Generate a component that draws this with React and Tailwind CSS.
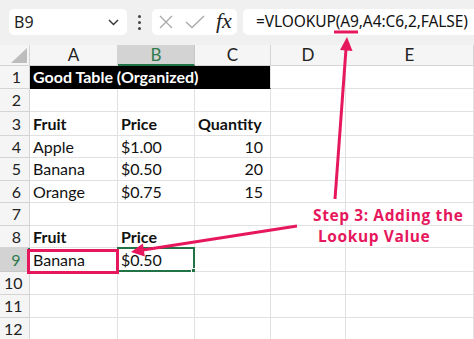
import React from "react";

const GRID = "'Lato', 'Open Sans', sans-serif";
const UI = "'Noto Sans', 'Open Sans', sans-serif";

const rowHeights = [23, 23, 24, 22, 23, 22, 23, 22, 24, 23, 23, 23];

const data = {
  1: { A: { t: "Good Table (Organized)", b: true, w: true } },
  3: { A: { t: "Fruit", b: true }, B: { t: "Price", b: true }, C: { t: "Quantity", b: true } },
  4: { A: { t: "Apple" }, B: { t: "$1.00" }, C: { t: "10", r: true } },
  5: { A: { t: "Banana" }, B: { t: "$0.50" }, C: { t: "20", r: true } },
  6: { A: { t: "Orange" }, B: { t: "$0.75" }, C: { t: "15", r: true } },
  8: { A: { t: "Fruit", b: true }, B: { t: "Price", b: true } },
  9: { A: { t: "Banana" }, B: { t: "$0.50" } },
};

const cols = [
  { k: "A", w: "w-[88px]" },
  { k: "B", w: "w-[77px]" },
  { k: "C", w: "w-[76px]" },
  { k: "D", w: "w-[75px]" },
  { k: "E", w: "flex-1" },
];

function Cell({ row, col }) {
  const c = (data[row] || {})[col.k];
  const black = row === 1 && (col.k === "A" || col.k === "B" || col.k === "C");
  const selected = row === 9 && col.k === "B";
  return (
    <div
      className={`${col.w} relative shrink-0 flex items-center border-r border-b ${
        black ? "bg-black border-black" : "bg-white border-[#e1e1e1]"
      } ${col.k === "C" && row === 1 ? "border-r-[#e1e1e1]" : ""}`}
    >
      {c && (
        <span
          className={`absolute z-10 top-0 bottom-0 flex items-center whitespace-nowrap text-[16px] leading-none ${
            c.r ? "right-[7px]" : "left-[3px]"
          } ${c.b ? "font-bold" : ""} ${c.w ? "text-white" : "text-[#111]"}`}
          style={{ fontFamily: GRID }}
        >
          {c.t}
        </span>
      )}
      {selected && (
        <div className="absolute -left-px -top-px right-[-1px] bottom-[-1px] border-2 border-[#217346]">
          <div className="absolute right-[-4px] bottom-[-4px] w-[6px] h-[6px] bg-[#217346] border border-white" />
        </div>
      )}
    </div>
  );
}

export default function App() {
  return (
    <div className="relative w-[474px] h-[339px] overflow-hidden bg-white">
      {/* formula bar */}
      <div className="h-[45px] bg-[#f0f0f0] flex items-start pt-[9px] pl-[9px]">
        <div className="w-[118px] h-[26px] bg-white rounded-[5px] flex items-center justify-between pl-[5px] pr-[8px]">
          <span className="text-[16px] text-[#222]" style={{ fontFamily: UI }}>
            B9
          </span>
          <svg width="11" height="7" viewBox="0 0 11 7">
            <path d="M1 1 L5.5 5.5 L10 1" fill="none" stroke="#333" strokeWidth="1.4" />
          </svg>
        </div>
        <div className="w-[25px] h-[26px] flex flex-col items-center justify-center gap-[3px]">
          <div className="w-[3px] h-[3px] rounded-full bg-[#444]" />
          <div className="w-[3px] h-[3px] rounded-full bg-[#444]" />
          <div className="w-[3px] h-[3px] rounded-full bg-[#444]" />
        </div>
        <div className="w-[85px] h-[26px] bg-white rounded-[5px] flex items-center pl-[6px]">
          <svg width="16" height="16" viewBox="0 0 16 16">
            <path d="M2 2 L14 14 M14 2 L2 14" stroke="#a8a8a8" strokeWidth="1.3" fill="none" />
          </svg>
          <svg width="20" height="14" viewBox="0 0 20 14" className="ml-[11px]">
            <path d="M1 7 L7 12.5 L19 1" stroke="#a8a8a8" strokeWidth="1.3" fill="none" />
          </svg>
          <span
            className="ml-[11px] text-[22px] italic leading-none text-[#222] -mt-[3px]"
            style={{ fontFamily: "'Liberation Serif', serif" }}
          >
            fx
          </span>
        </div>
        <div className="ml-[6px] flex-1 h-[26px] bg-white rounded-l-[5px] flex items-center pl-[13px]">
          <span className="text-[15.5px] text-[#111] whitespace-nowrap tracking-[-0.1px]" style={{ fontFamily: UI }}>
            =VLOOKUP(A9,A4:C6,2,FALSE)
          </span>
        </div>
      </div>

      {/* column headers */}
      <div className="flex h-[21px]">
        <div className="w-[30px] shrink-0 bg-[#f5f5f5] border-r border-b border-[#d4d4d4] relative">
          <svg width="30" height="21" viewBox="0 0 30 21" className="absolute inset-0">
            <path d="M27 3 L27 18 L11 18 Z" fill="#bdbdbd" />
          </svg>
        </div>
        {cols.map((c) => (
          <div
            key={c.k}
            className={`${c.w} shrink-0 flex items-center justify-center text-[17px] border-r ${
              c.k === "B"
                ? "bg-[#d3d3d3] text-[#2f7a4c] border-b-2 border-b-[#217346] border-r-[#c8c8c8]"
                : "bg-[#f5f5f5] text-[#222] border-b border-[#d4d4d4]"
            }`}
            style={{ fontFamily: GRID }}
          >
            {c.k}
          </div>
        ))}
      </div>

      {/* rows */}
      {rowHeights.map((h, i) => {
        const row = i + 1;
        return (
          <div key={row} className="flex" style={{ height: h }}>
            <div
              className={`w-[30px] shrink-0 flex items-center pl-[4px] text-[16px] leading-none border-r border-b ${
                row === 9
                  ? "bg-[#d3d3d3] text-[#2f7a4c] border-r-2 border-r-[#217346] border-b-[#c8c8c8]"
                  : "bg-[#f5f5f5] text-[#222] border-[#d4d4d4]"
              } ${row < 10 ? "justify-center pl-0" : ""}`}
              style={{ fontFamily: GRID }}
            >
              {row}
            </div>
            {cols.map((c) => (
              <Cell key={c.k} row={row} col={c} />
            ))}
          </div>
        );
      })}

      {/* annotation overlays */}
      <div className="absolute left-[27px] top-[249px] w-[92px] h-[25px] border-[3px] border-[#e6175c]" />

      <svg className="absolute inset-0 pointer-events-none" width="474" height="339" viewBox="0 0 474 339">
        <line x1="334" y1="32" x2="358" y2="32" stroke="#e6175c" strokeWidth="3" />
        <line x1="335" y1="199" x2="346" y2="49" stroke="#e6175c" strokeWidth="3" />
        <polygon points="347,37 352.5,51 340,50" fill="#e6175c" />
        <line x1="297" y1="226" x2="143" y2="250" stroke="#e6175c" strokeWidth="3" />
        <polygon points="131,252 144.8,256.5 142.9,243.6" fill="#e6175c" />
      </svg>

      <div
        className="absolute left-[313px] top-[205px] text-[15.5px] font-bold leading-[21px] tracking-[0.6px] text-[#e6175c] whitespace-nowrap"
        style={{ fontFamily: "'Open Sans', sans-serif" }}
      >
        <div>Step 3: Adding the</div>
        <div className="pl-[5px]">Lookup Value</div>
      </div>
    </div>
  );
}
